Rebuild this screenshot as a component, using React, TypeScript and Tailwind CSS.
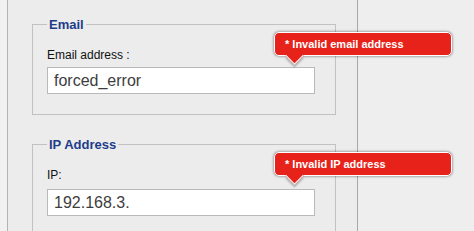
import React from "react";

const FIELDS = [
  { legend: "Email", label: "Email address :", value: "forced_error", error: "* Invalid email address" },
  { legend: "IP Address", label: "IP:", value: "192.168.3.", error: "* Invalid IP address" },
];

function ErrorTip({ text, top }: { text: string; top: string }) {
  return (
    <div className={`absolute left-[227px] ${top} z-10 w-[178px] h-[24px] rounded-[5px] border-[1.5px] border-white bg-[#e6221a] shadow-[0_0_3px_rgba(0,0,0,0.6)]`}>
      <div className="absolute left-[13px] bottom-[-7px] w-[13px] h-[13px] rotate-45 bg-[#e6221a] border-r-[1.5px] border-b-[1.5px] border-white shadow-[2px_2px_2px_rgba(0,0,0,0.25)]" />
      <div className="relative flex h-full items-center pl-[10px] text-[11px] font-bold text-white leading-none">
        {text}
      </div>
    </div>
  );
}

export default function App() {
  return (
    <div className="flex h-[231px] w-[474px] overflow-hidden bg-[#ececec] font-['Liberation_Sans',Arial,sans-serif]">
      <div className="w-[8px] shrink-0 border-r border-[#b4b4b4] bg-[#f1f1f1]" />
      <div className="w-[350px] shrink-0 border-r border-[#a8a8a8] pl-[24px] pt-[17px]">
        {FIELDS.map((f, i) => (
          <fieldset
            key={f.legend}
            className={`w-[304px] border border-[#c2c2c2] px-[14px] pt-[15px] pb-[20px] ${i > 0 ? "mt-[22px]" : ""}`}
          >
            <legend className="px-[2px] text-[13px] font-bold leading-[15px] text-[#1d3c8a]">{f.legend}</legend>
            <div className="text-[12px] leading-[16px] text-[#111]">{f.label}</div>
            <div className={`relative ${i > 0 ? "mt-[6px]" : "mt-[4px]"}`}>
              <div className="flex h-[27px] w-[268px] items-center border border-[#b9b9b9] bg-white pl-[6px] text-[16px] text-[#3d3d3d]">
                {f.value}
              </div>
              <ErrorTip text={f.error} top={i > 0 ? "top-[-37px]" : "top-[-35px]"} />
            </div>
          </fieldset>
        ))}
      </div>
      <div className="flex-1 bg-[#eeeeee]" />
    </div>
  );
}
